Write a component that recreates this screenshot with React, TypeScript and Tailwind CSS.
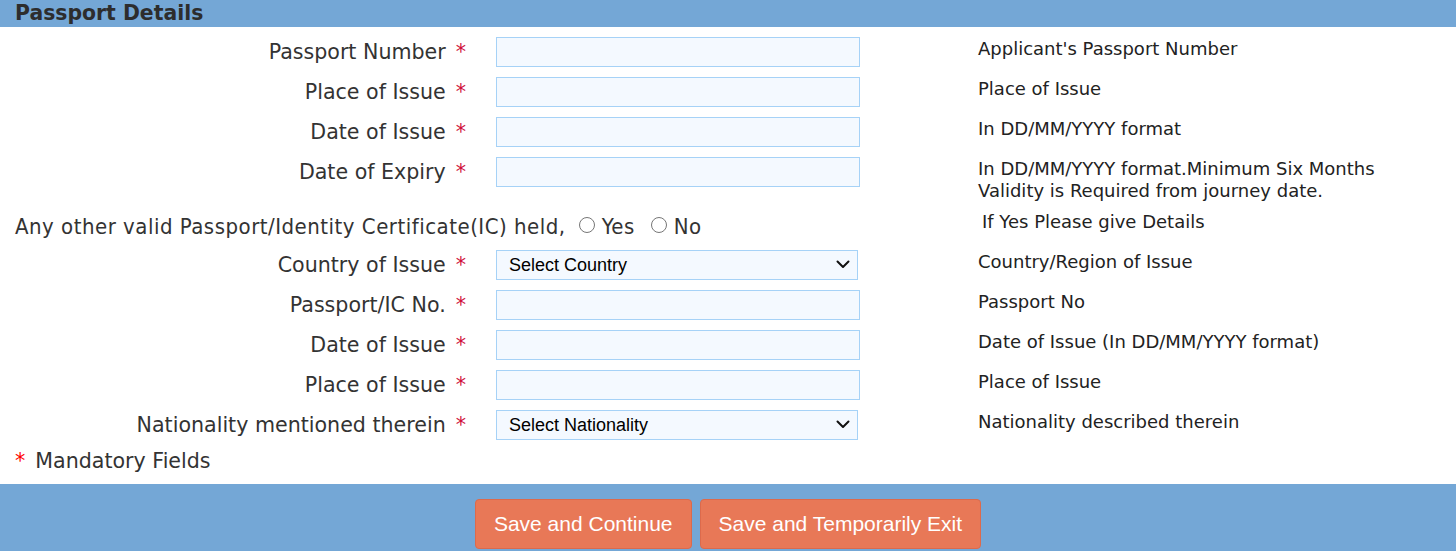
import React from "react";

const verdana = { fontFamily: '"DejaVu Sans", Verdana, sans-serif' };

function Req() {
  return <span className="text-[#d0103a] ml-[10px]">*</span>;
}

function Field({ label, helper, select }: { label: string; helper: React.ReactNode; select?: string }) {
  return (
    <div className="flex items-start min-h-[40px]">
      <div className="w-[481px] h-[40px] pr-[15px] flex items-center justify-end text-[20.6px] leading-[24px] text-[#333]">
        <span>
          {label}
          <Req />
        </span>
      </div>
      <div className="ml-[15px] mt-[5px] w-[364px]">
        {select ? (
          <div className="relative w-[362px] h-[30px]">
            <select
              className="appearance-none w-full h-full bg-[#f4f9ff] border border-[#a6d2f7] pl-[12px] text-[18px] text-black outline-none"
              style={{ fontFamily: '"Liberation Sans", Arial, sans-serif' }}
              defaultValue=""
            >
              <option value="">{select}</option>
            </select>
            <svg
              className="absolute right-[8px] top-[10px] pointer-events-none"
              width="14"
              height="9"
              viewBox="0 0 14 9"
              fill="none"
            >
              <path d="M1.5 1.5 L7 7 L12.5 1.5" stroke="#111" strokeWidth="2" strokeLinecap="round" strokeLinejoin="round" />
            </svg>
          </div>
        ) : (
          <input type="text" className="block w-[364px] h-[30px] bg-[#f4f9ff] border border-[#a6d2f7] outline-none" />
        )}
      </div>
      <div className="ml-[118px] pt-[6px] text-[18px] leading-[22px] text-[#222]">{helper}</div>
    </div>
  );
}

function Radio({ label }: { label: string }) {
  return (
    <span className="inline-flex items-center">
      <span className="inline-block w-[16px] h-[16px] rounded-full border border-[#767676] bg-white mr-[7px] translate-y-[-2px]" />
      <span>{label}</span>
    </span>
  );
}

export default function App() {
  return (
    <div className="w-[1456px] bg-white" style={verdana}>
      <div className="h-[27px] bg-[#74a7d6] pl-[15px] flex items-center">
        <span className="text-[20.4px] font-bold text-[#2d2d2d] leading-none">Passport Details</span>
      </div>
      <div className="mt-[5px]">
        <Field label="Passport Number" helper="Applicant's Passport Number" />
        <Field label="Place of Issue" helper="Place of Issue" />
        <Field label="Date of Issue" helper="In DD/MM/YYYY format" />
        <Field
          label="Date of Expiry"
          helper={
            <>
              In DD/MM/YYYY format.Minimum Six Months
              <br />
              Validity is Required from journey date.
            </>
          }
        />
        <div className="flex items-start h-[43px]">
          <div
            className="w-[982px] pl-[15px] pt-[13px] text-[22px] tracking-[0.5px] leading-[24px] text-[#333] flex items-center"
            style={{ fontFamily: '"DejaVu Sans Condensed", "DejaVu Sans", sans-serif', fontStretch: "condensed" }}
          >
            <span className="mr-[13px]">Any other valid Passport/Identity Certificate(IC) held,</span>
            <Radio label="Yes" />
            <span className="w-[16px]" />
            <Radio label="No" />
          </div>
          <div className="pt-[9px] text-[18px] leading-[22px] text-[#222]">If Yes Please give Details</div>
        </div>
        <Field label="Country of Issue" helper="Country/Region of Issue" select="Select Country" />
        <Field label="Passport/IC No." helper="Passport No" />
        <Field label="Date of Issue" helper="Date of Issue (In DD/MM/YYYY format)" />
        <Field label="Place of Issue" helper="Place of Issue" />
        <Field label="Nationality mentioned therein" helper="Nationality described therein" select="Select Nationality" />
        <div className="h-[39px] pl-[15px] pt-[4px] text-[20.6px] leading-[24px] text-[#333]">
          <span className="text-[#f00] mr-[10px]">*</span>Mandatory Fields
        </div>
      </div>
      <div
        className="bg-[#74a7d6] pt-[15px] pb-[15px] flex justify-center gap-[8px]"
        style={{ fontFamily: '"Liberation Sans", Arial, sans-serif' }}
      >
        <button className="h-[50px] px-[18px] bg-[#e87857] border border-[#dc6a4c] rounded-[4px] text-white text-[21px]">
          Save and Continue
        </button>
        <button className="h-[50px] px-[18px] bg-[#e87857] border border-[#dc6a4c] rounded-[4px] text-white text-[21px]">
          Save and Temporarily Exit
        </button>
      </div>
    </div>
  );
}
